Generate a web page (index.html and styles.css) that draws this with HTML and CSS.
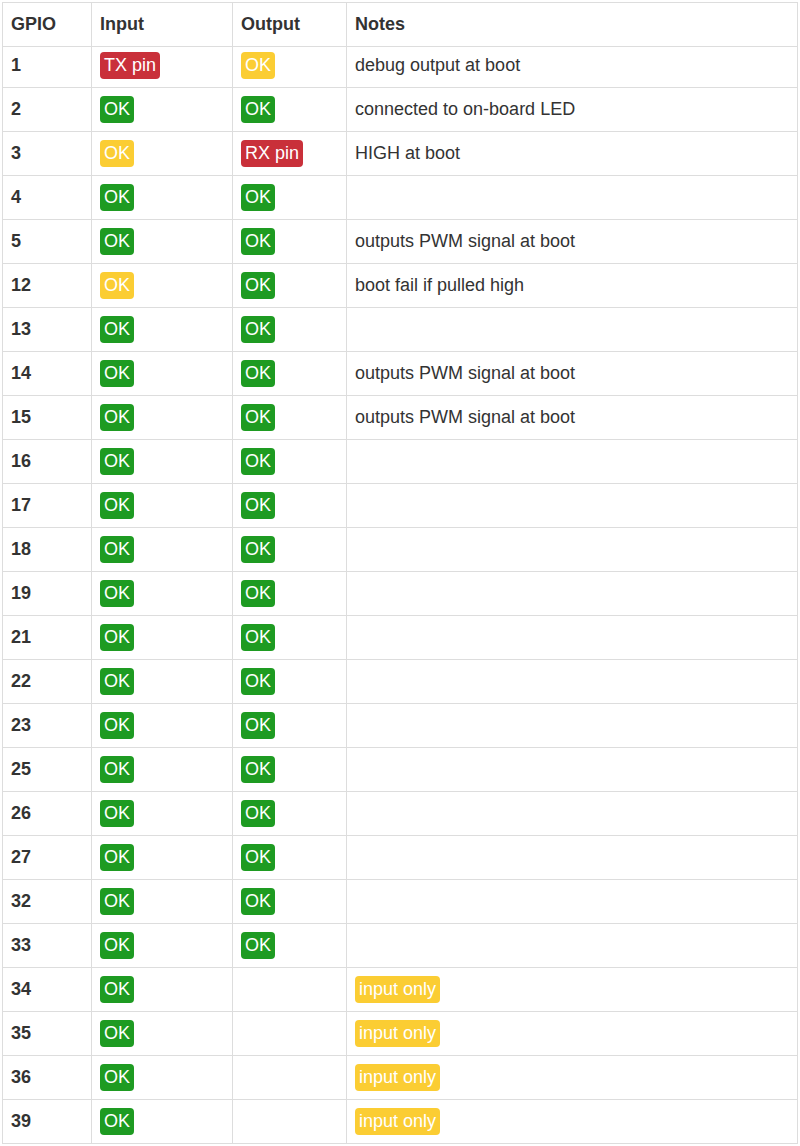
FILE: index.html
```html
<!DOCTYPE html>
<html lang="en">
<head>
    <meta charset="UTF-8">
    <title>ESP32 GPIO</title>
    <link rel="stylesheet" href="styles.css">
</head>
<body>
<table class="pins">
    <colgroup>
        <col class="c-gpio">
        <col class="c-in">
        <col class="c-out">
        <col>
    </colgroup>
    <thead>
        <tr><th>GPIO</th><th>Input</th><th>Output</th><th>Notes</th></tr>
    </thead>
    <tbody>
        <tr><td>1</td><td><span class="tag bad">TX pin</span></td><td><span class="tag warn">OK</span></td><td>debug output at boot</td></tr>
        <tr><td>2</td><td><span class="tag ok">OK</span></td><td><span class="tag ok">OK</span></td><td>connected to on-board LED</td></tr>
        <tr><td>3</td><td><span class="tag warn">OK</span></td><td><span class="tag bad">RX pin</span></td><td>HIGH at boot</td></tr>
        <tr><td>4</td><td><span class="tag ok">OK</span></td><td><span class="tag ok">OK</span></td><td></td></tr>
        <tr><td>5</td><td><span class="tag ok">OK</span></td><td><span class="tag ok">OK</span></td><td>outputs PWM signal at boot</td></tr>
        <tr><td>12</td><td><span class="tag warn">OK</span></td><td><span class="tag ok">OK</span></td><td>boot fail if pulled high</td></tr>
        <tr><td>13</td><td><span class="tag ok">OK</span></td><td><span class="tag ok">OK</span></td><td></td></tr>
        <tr><td>14</td><td><span class="tag ok">OK</span></td><td><span class="tag ok">OK</span></td><td>outputs PWM signal at boot</td></tr>
        <tr><td>15</td><td><span class="tag ok">OK</span></td><td><span class="tag ok">OK</span></td><td>outputs PWM signal at boot</td></tr>
        <tr><td>16</td><td><span class="tag ok">OK</span></td><td><span class="tag ok">OK</span></td><td></td></tr>
        <tr><td>17</td><td><span class="tag ok">OK</span></td><td><span class="tag ok">OK</span></td><td></td></tr>
        <tr><td>18</td><td><span class="tag ok">OK</span></td><td><span class="tag ok">OK</span></td><td></td></tr>
        <tr><td>19</td><td><span class="tag ok">OK</span></td><td><span class="tag ok">OK</span></td><td></td></tr>
        <tr><td>21</td><td><span class="tag ok">OK</span></td><td><span class="tag ok">OK</span></td><td></td></tr>
        <tr><td>22</td><td><span class="tag ok">OK</span></td><td><span class="tag ok">OK</span></td><td></td></tr>
        <tr><td>23</td><td><span class="tag ok">OK</span></td><td><span class="tag ok">OK</span></td><td></td></tr>
        <tr><td>25</td><td><span class="tag ok">OK</span></td><td><span class="tag ok">OK</span></td><td></td></tr>
        <tr><td>26</td><td><span class="tag ok">OK</span></td><td><span class="tag ok">OK</span></td><td></td></tr>
        <tr><td>27</td><td><span class="tag ok">OK</span></td><td><span class="tag ok">OK</span></td><td></td></tr>
        <tr><td>32</td><td><span class="tag ok">OK</span></td><td><span class="tag ok">OK</span></td><td></td></tr>
        <tr><td>33</td><td><span class="tag ok">OK</span></td><td><span class="tag ok">OK</span></td><td></td></tr>
        <tr><td>34</td><td><span class="tag ok">OK</span></td><td></td><td><span class="tag warn">input only</span></td></tr>
        <tr><td>35</td><td><span class="tag ok">OK</span></td><td></td><td><span class="tag warn">input only</span></td></tr>
        <tr><td>36</td><td><span class="tag ok">OK</span></td><td></td><td><span class="tag warn">input only</span></td></tr>
        <tr><td>39</td><td><span class="tag ok">OK</span></td><td></td><td><span class="tag warn">input only</span></td></tr>
    </tbody>
</table>
</body>
</html>
```

FILE: styles.css
```css
body{
    margin: 2px;
    font-family: "Liberation Sans", Arial, sans-serif;
    font-size: 18px;
    color: #333;
    background: #fff;
}
.pins{
    width: 796px;
    border-collapse: collapse;
    table-layout: fixed;
}
.c-gpio{width: 89px}
.c-in{width: 141px}
.c-out{width: 114px}
.pins th,
.pins td{
    border: 1px solid #ddd;
    height: 27px;
    line-height: 27px;
    padding: 8px;
    text-align: left;
    vertical-align: top;
}
.pins th{
    font-weight: bold;
}
/* first body row sits a bit closer to the header */
.pins tbody tr:first-child td{
    padding-top: 5px;
}
.pins td:first-child{
    font-weight: bold;
}
.tag{
    display: inline-block;
    padding: 0 4px;
    border-radius: 4px;
    color: #fff;
    line-height: 27px;
}
.ok{background: #1e9b22}
.bad{background: #c9303a}
.warn{background: #fbcd33}
```
